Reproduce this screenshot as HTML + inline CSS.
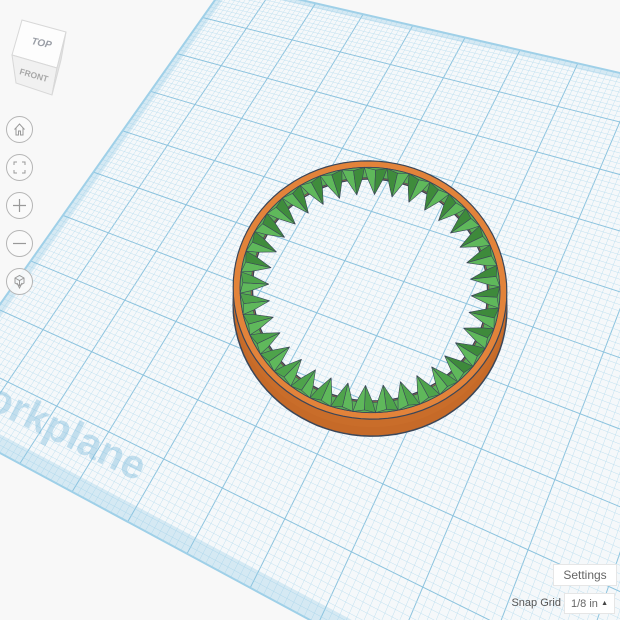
<!DOCTYPE html>
<html><head><meta charset="utf-8">
<style>
html,body{margin:0;padding:0;background:#f8f8f8;width:620px;height:620px;overflow:hidden;font-family:"Liberation Sans",sans-serif}
#s{position:absolute;left:0;top:0}
.btn{position:absolute;left:6px;width:25px;height:25px;border:1px solid #b5b5b5;border-radius:50%;background:rgba(250,250,250,.9)}
.ui{position:absolute;background:#fff;border:1px solid #e6e6e6;color:#666;font-size:12px;line-height:20px;text-align:center}
</style></head><body>
<svg id="s" width="620" height="620" viewBox="0 0 620 620">
<g id="plane"></g>
<text x="-50" y="390" transform="rotate(26 -50 390)" font-family="Liberation Sans" font-weight="bold" font-size="41" fill="rgba(110,180,215,0.38)">Workplane</text>
<g id="ring"></g>
<g>
<polygon points="12,55 22,20 66,32 57,68" fill="#fdfdfd" stroke="#d8d8d8" stroke-width="1"/>
<polygon points="12,55 57,68 52,95 16,83" fill="#f1f1f1" stroke="#d8d8d8" stroke-width="1"/>
<polygon points="57,68 66,32 61,60 52,95" fill="#e4e4e4" stroke="#d8d8d8" stroke-width="1"/>
<text x="31" y="44" transform="rotate(12 31 44)" font-size="10" font-style="italic" font-weight="bold" fill="#9a9ea6">TOP</text>
<text x="19" y="74" transform="rotate(16 19 74)" font-size="8.5" font-weight="bold" fill="#a8a8a8">FRONT</text>
</g>
</svg>
<div class="btn" style="top:116px"><svg width="25" height="25"><path d="M7.5 12.5 L12.5 7 L17.5 12.5 M9 11 V18 H11.5 V14 H13.5 V18 H16 V11" fill="none" stroke="#999" stroke-width="1"/></svg></div>
<div class="btn" style="top:154px"><svg width="25" height="25"><path d="M7 10V7H10 M15 7H18V10 M18 15V18H15 M10 18H7V15" fill="none" stroke="#999" stroke-width="1"/></svg></div>
<div class="btn" style="top:192px"><svg width="25" height="25"><path d="M12.5 6V19 M6 12.5H19" fill="none" stroke="#999" stroke-width="1.2"/></svg></div>
<div class="btn" style="top:230px"><svg width="25" height="25"><path d="M6 12.5H19" fill="none" stroke="#999" stroke-width="1.2"/></svg></div>
<div class="btn" style="top:268px"><svg width="25" height="25"><path d="M8 9 L12.5 6.5 L17 9 V14 L12.5 16.5 L8 14 Z M8 9 L12.5 11.5 L17 9 M12.5 11.5 V16.5 M10 14 L12.5 19 L15 14" fill="none" stroke="#999" stroke-width="1"/></svg></div>
<div class="ui" style="left:553px;top:564px;width:62px;height:20px">Settings</div>
<div style="position:absolute;right:59px;top:597px;font-size:11px;color:#555;white-space:nowrap">Snap Grid</div>
<div class="ui" style="left:564px;top:593px;width:51px;height:21px;text-align:left;padding-left:6px;box-sizing:border-box;font-size:11px;white-space:nowrap">1/8 in<span style="position:absolute;right:6px;top:0;font-size:7px;color:#444">▲</span></div>
<script>
(function(){
function H(p0,p1,p2,p3){
 var dx1=p1[0]-p2[0],dx2=p3[0]-p2[0],dx3=p0[0]-p1[0]+p2[0]-p3[0];
 var dy1=p1[1]-p2[1],dy2=p3[1]-p2[1],dy3=p0[1]-p1[1]+p2[1]-p3[1];
 var den=dx1*dy2-dy1*dx2;
 var g=(dx3*dy2-dy3*dx2)/den,h=(dx1*dy3-dy1*dx3)/den;
 var a=p1[0]-p0[0]+g*p1[0],b=p3[0]-p0[0]+h*p3[0],c=p0[0];
 var d=p1[1]-p0[1]+g*p1[1],e=p3[1]-p0[1]+h*p3[1],f=p0[1];
 return function(u,v){var w=g*u+h*v+1;return [(a*u+b*v+c)/w,(d*u+e*v+f)/w];};
}
var A=[227,-17],B=[1000,160],C=[850,911],D=[-76,412];
var M=H(A,B,C,D);
var pl=document.getElementById('plane');
var s='<polygon points="'+[A,B,C,D].map(function(p){return p.join(',')}).join(' ')+'" fill="#f5f8fa"/>';
var NU=13,NV=10,u,v,i,p,q;
for(i=0;i<=NU*10;i++){u=i/(NU*10);p=M(u,0);q=M(u,1);
 var maj=i%10==0;
 s+='<line x1="'+p[0].toFixed(1)+'" y1="'+p[1].toFixed(1)+'" x2="'+q[0].toFixed(1)+'" y2="'+q[1].toFixed(1)+'" stroke="'+(maj?'#8cc3de':'#bfe0f0')+'" stroke-width="'+(maj?1:0.5)+'"/>';}
for(i=0;i<=NV*10;i++){v=i/(NV*10);p=M(0,v);q=M(1,v);
 var maj=i%10==0;
 s+='<line x1="'+p[0].toFixed(1)+'" y1="'+p[1].toFixed(1)+'" x2="'+q[0].toFixed(1)+'" y2="'+q[1].toFixed(1)+'" stroke="'+(maj?'#8cc3de':'#bfe0f0')+'" stroke-width="'+(maj?1:0.5)+'"/>';}
var e=0.012;
function band(pts){return '<polygon points="'+pts.map(function(p){return p[0].toFixed(1)+','+p[1].toFixed(1)}).join(' ')+'" fill="rgba(140,200,230,0.3)"/>';}
s+=band([M(0,0),M(1,0),M(1,e),M(0,e)]);
s+=band([M(0,0),M(e,0),M(e,1),M(0,1)]);
s+=band([M(0,1-2*e),M(1,1-2*e),M(1,1),M(0,1)]);
s+='<polygon points="'+[A,B,C,D].map(function(p){return p.join(',')}).join(' ')+'" fill="none" stroke="#9fd0e8" stroke-width="2"/>';
pl.innerHTML=s;
var cx=370,cy=290,rx=137,ry=129,rot=8*Math.PI/180;
function E(r,t,dy){var x=rx*r*Math.cos(t),y=ry*r*Math.sin(t);
 return [cx+x*Math.cos(rot)-y*Math.sin(rot),cy+x*Math.sin(rot)+y*Math.cos(rot)+(dy||0)];}
function ell(r,dy){var a=[];for(var k=0;k<=96;k++){var p=E(r,k/96*2*Math.PI,dy);a.push((k?'L':'M')+p[0].toFixed(1)+' '+p[1].toFixed(1));}return a.join(' ')+'Z';}
function pts(arr){return arr.map(function(p){return p[0].toFixed(1)+','+p[1].toFixed(1)}).join(' ');}
var hole=ell(0.86,0);
var r='';
r+='<path d="'+ell(1,17)+' '+hole+'" fill="#c66a28" fill-rule="evenodd" stroke="#3b4658" stroke-width="1.5"/>';
r+='<path d="'+ell(1,8)+' '+hole+'" fill="#c96d2a" fill-rule="evenodd"/>';
r+='<path d="'+ell(1,0)+' '+hole+'" fill="#e2833a" fill-rule="evenodd" stroke="#3b4658" stroke-width="1.2"/>';
r+='<path d="'+ell(0.95,0)+' '+ell(0.87,0)+'" fill="#5aaf55" fill-rule="evenodd" stroke="#3b4658" stroke-width="0.7"/>';
var N=36;
for(i=0;i<N;i++){
 var t0=(i)/N*2*Math.PI,t1=(i+1)/N*2*Math.PI,tm=(i+0.5)/N*2*Math.PI;
 var b0=E(0.95,t0),b1=E(0.95,t1),tip=E(0.74,tm),bm=E(0.93,tm);
 var l0=E(0.87,t0+0.02),l1=E(0.87,t1-0.02);
 var sn=Math.sin(tm),cs=Math.cos(tm);
 var light='#5fb85b',dark=(sn<0?'#3f8c3c':'#4ea34b');
 if(cs>0.3&&sn<0.6) dark='#3e8a3b';
 r+='<polygon points="'+pts([b0,bm,tip,l0])+'" fill="'+(cs<0?light:dark)+'" stroke="#3b4658" stroke-width="0.6"/>';
 r+='<polygon points="'+pts([bm,b1,l1,tip])+'" fill="'+(cs<0?dark:light)+'" stroke="#3b4658" stroke-width="0.6"/>';
}
r+='<path d="'+ell(0.95,0)+'" fill="none" stroke="#3b4658" stroke-width="0.8"/>';
document.getElementById('ring').innerHTML=r;
})();
</script>
</body></html>
